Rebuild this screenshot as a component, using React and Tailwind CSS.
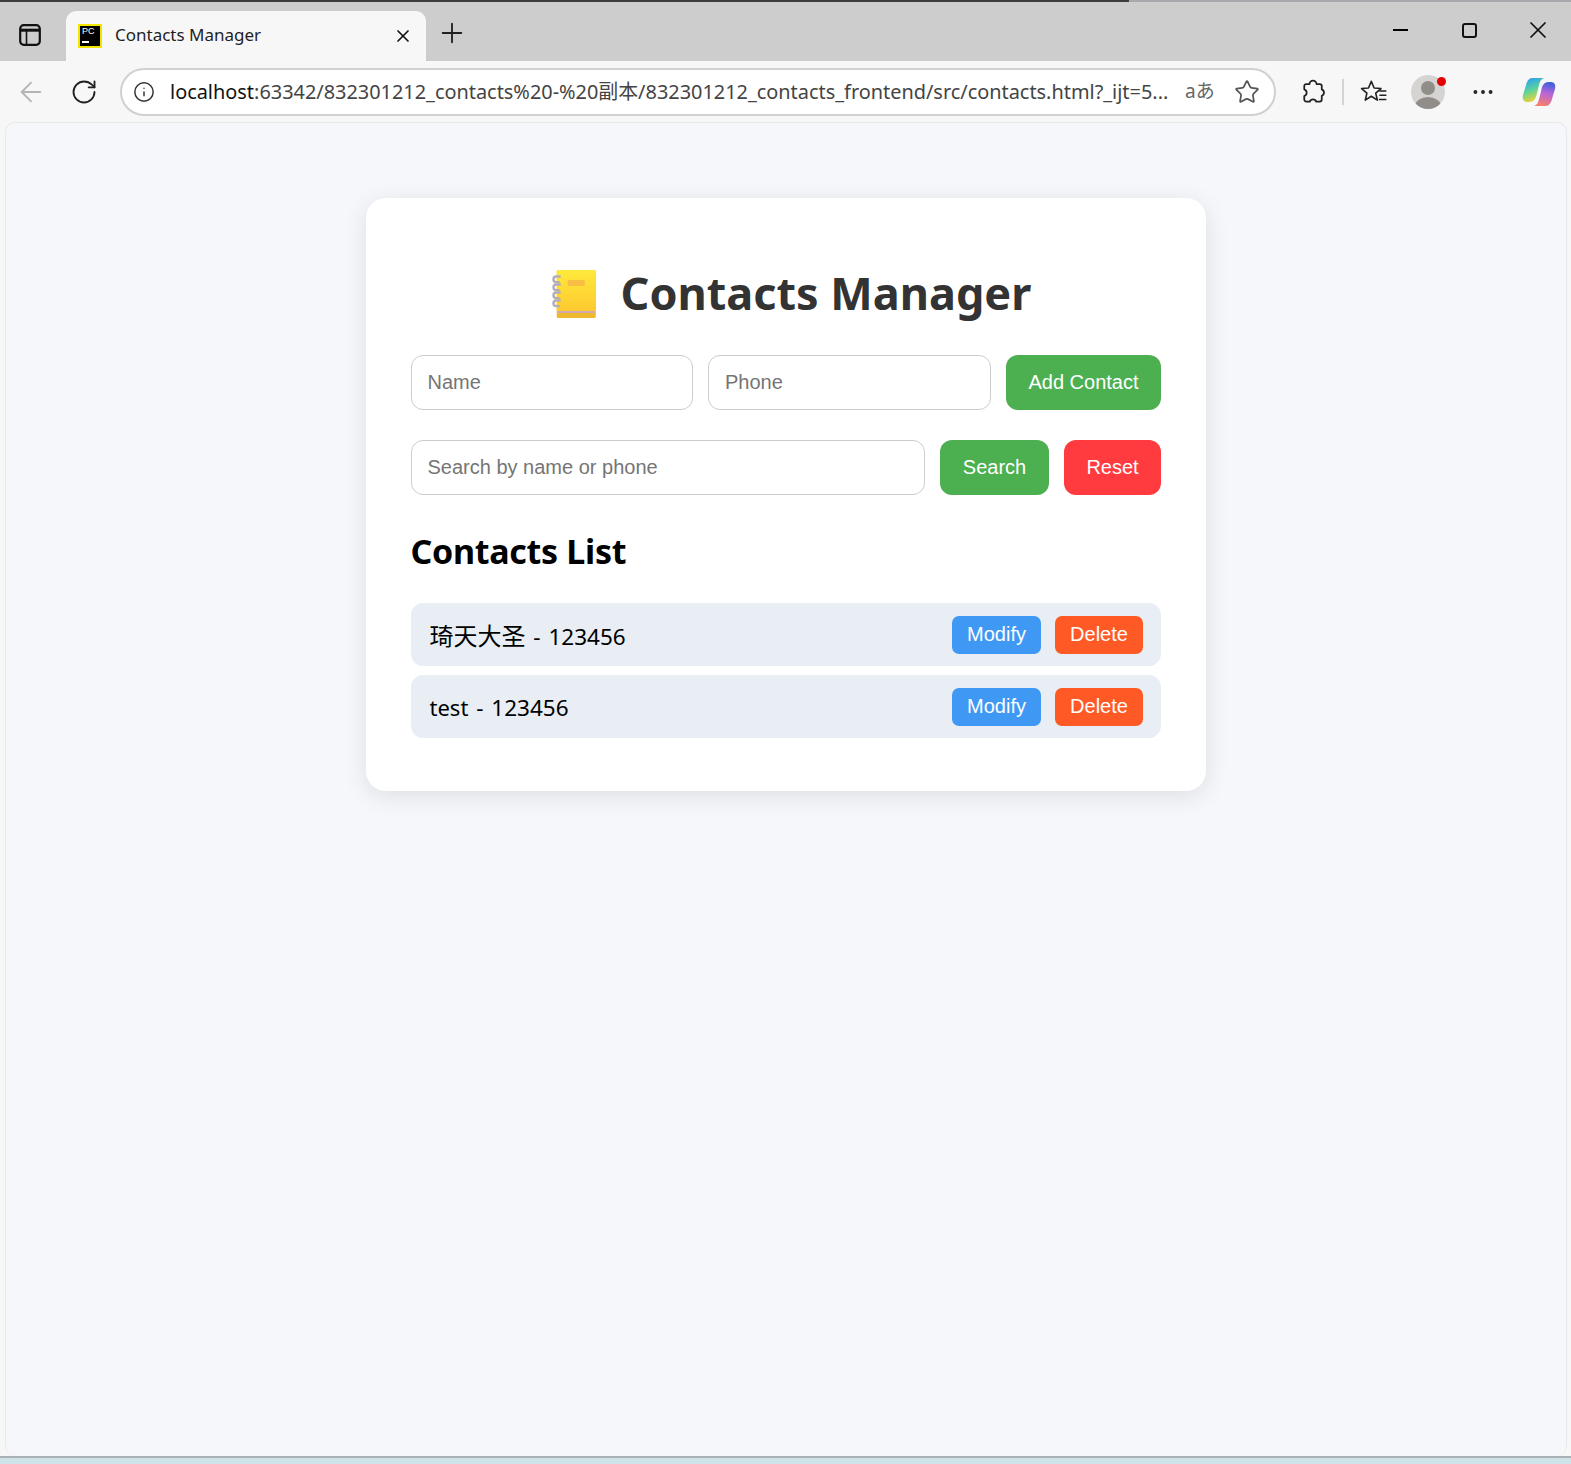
import { ArrowLeft, Info, MoreHorizontal, Plus, RotateCw, Star, X } from "lucide-react";

const contacts = [
  { id: 1, name: "琦天大圣", phone: "123456", cjk: true },
  { id: 2, name: "test", phone: "123456", cjk: false },
];

function PanelIcon() {
  return (
    <svg width="22" height="22" viewBox="0 0 22 22" fill="none" stroke="#111" strokeWidth="2.2">
      <rect x="1.2" y="1.2" width="19.6" height="19.6" rx="3.5" />
      <path d="M1.5 6.2h19" strokeWidth="3" />
      <path d="M7.5 6.5v14" strokeWidth="1.6" />
    </svg>
  );
}

function PyCharmIcon() {
  return (
    <div className="flex h-6 w-6 shrink-0 flex-col justify-between border-2 border-[#f2e500] bg-black px-[2px] pt-[1px] pb-[3px]">
      <span className="font-['Liberation_Sans',sans-serif] text-[9px] leading-[9px] text-white">PC</span>
      <span className="h-[2px] w-[7px] bg-white"></span>
    </div>
  );
}

function ExtensionIcon() {
  return (
    <svg width="28" height="28" viewBox="0 0 24 24" fill="none" stroke="#222" strokeWidth="1.5" strokeLinejoin="round">
      <path d="M9 5.2a3 3 0 0 1 6 0h2.800a1.700 1.700 0 0 1 1.700 1.700v2.800a3 3 0 0 1 0 5.600v3.200a1.700 1.700 0 0 1-1.700 1.700h-3a3 3 0 0 0-5.600 0H6.200a1.700 1.700 0 0 1-1.700-1.700v-3.100a3 3 0 0 0 0-5.700V6.900a1.700 1.700 0 0 1 1.700-1.700z" />
    </svg>
  );
}

function FavoritesIcon() {
  return (
    <svg width="28" height="26" viewBox="0 0 26 24" fill="none" stroke="#222" strokeWidth="1.500" strokeLinejoin="round">
      <path d="M10.500 2l2.600 6.300 6.400.5-4.900 4.300 1.500 6.400-5.600-3.500-5.600 3.500 1.500-6.400L1.500 8.800l6.400-.5z" />
      <path d="M18 11h6.500M18 15h6.500M17.500 19h7" strokeWidth="1.400" />
    </svg>
  );
}

function ProfileIcon() {
  return (
    <div className="relative h-[34px] w-[34px]">
      <svg width="34" height="34" viewBox="0 0 34 34">
        <defs>
          <clipPath id="avatar">
            <circle cx="17" cy="17" r="17" />
          </clipPath>
        </defs>
        <circle cx="17" cy="17" r="17" fill="#d6d4d2" />
        <g clipPath="url(#avatar)" fill="#918d89">
          <circle cx="17" cy="13" r="7" />
          <ellipse cx="17" cy="31" rx="13" ry="9" />
        </g>
      </svg>
      <span className="absolute top-[2px] right-[-1px] h-[9px] w-[9px] rounded-full bg-[#e30000]"></span>
    </div>
  );
}

function CopilotIcon() {
  return (
    <svg width="34" height="34" viewBox="0 0 34 34">
      <defs>
        <linearGradient id="cpA" x1="0.2" y1="0" x2="0.5" y2="1">
          <stop offset="0" stopColor="#2f9df0" />
          <stop offset="0.5" stopColor="#58d3a0" />
          <stop offset="1" stopColor="#f6d32c" />
        </linearGradient>
        <linearGradient id="cpB" x1="0.6" y1="0" x2="0.4" y2="1">
          <stop offset="0" stopColor="#3b62dc" />
          <stop offset="0.45" stopColor="#b865d8" />
          <stop offset="1" stopColor="#f6806a" />
        </linearGradient>
      </defs>
      <path d="M10 3h12c-3 1-4 3-5 7l-2.500 10c-1 4-3 7-7 7H5c-3.500 0-5-3-4-7l3-10c1-4 3-7 6-7z" fill="url(#cpA)" />
      <path d="M24 31H12c3-1 4-3 5-7l2.500-10c1-4 3-7 7-7H29c3.500 0 5 3 4 7l-3 10c-1 4-3 7-6 7z" fill="url(#cpB)" />
      <path d="M15.500 20l3-9.500c.4 3 .6 5-.5 9.500l-1.500 4z" fill="#fff" opacity="0.7" />
    </svg>
  );
}

function NotebookIcon() {
  return (
    <svg width="44" height="48" viewBox="0.5 1 43.5 48" className="shrink-0">
      <defs>
        <linearGradient id="nbPage" x1="0" y1="0" x2="0" y2="1">
          <stop offset="0" stopColor="#ffe93b" />
          <stop offset="1" stopColor="#fdc92f" />
        </linearGradient>
      </defs>
      <rect x="5" y="1" width="39" height="48" rx="1.500" fill="#eeb92e" />
      <rect x="5" y="1" width="39" height="41" rx="1.500" fill="url(#nbPage)" />
      <rect x="6" y="42" width="37" height="2" fill="#d2a9b0" />
      <rect x="16" y="11" width="17" height="6" rx="1" fill="#f9bd45" />
      <g fill="none" stroke="#b3adba" strokeWidth="2.400">
        <path d="M9 7.500H4.500a2.800 2.800 0 0 0 0 5.600H8" />
        <path d="M9 15.500H4.500a2.800 2.800 0 0 0 0 5.600H8" />
        <path d="M9 23.500H4.500a2.800 2.800 0 0 0 0 5.600H8" />
        <path d="M9 31.500H4.500a2.800 2.800 0 0 0 0 5.600H8" />
      </g>
    </svg>
  );
}

function BrowserChrome() {
  return (
    <div className="font-['Noto_Sans','Noto_Sans_CJK_SC',sans-serif]">
      <div className="relative flex h-[61px] items-end bg-[#cdcdcd] pl-[19px]">
        <div className="absolute top-0 left-0 h-[2px] w-[1129px] bg-[#3d3d3d]"></div>
        <div className="absolute top-0 right-0 h-[2px] w-[442px] bg-[#a9a9ad]"></div>
        <div className="mb-[15px] mr-[25px]">
          <PanelIcon />
        </div>
        <div className="flex h-[50px] w-[360px] items-center rounded-t-[10px] bg-[#f7f7f7] pr-[13px] pl-[12px]">
          <PyCharmIcon />
          <span className="mb-[3px] ml-[13px] flex-1 text-[17px] text-[#1f1f1f]">Contacts Manager</span>
          <X size={20} color="#111" strokeWidth={2} />
        </div>
        <div className="mb-[12px] ml-[10px]">
          <Plus size={32} color="#222" strokeWidth={1.400} />
        </div>
        <div className="flex-1"></div>
        <div className="mb-[17px] flex items-center pr-[19px]">
          <span className="h-[2px] w-[15px] bg-black"></span>
          <span className="ml-[54px] h-[15px] w-[15px] rounded-[3px] border-2 border-[#111]"></span>
          <div className="ml-[47px]">
            <X size={28} color="#111" strokeWidth={1.500} />
          </div>
        </div>
      </div>
      <div className="flex h-[61px] items-center bg-[#f7f7f7] pl-[15px]">
        <ArrowLeft size={32} color="#b5b5b5" strokeWidth={1.400} />
        <div className="ml-[23px]">
          <RotateCw size={28} color="#222" strokeWidth={1.600} />
        </div>
        <div className="ml-[22px] flex h-[48px] w-[1156px] items-center rounded-full border-2 border-[#d0d0d0] bg-white pr-[14px] pl-[11px]">
          <Info size={22} color="#333" strokeWidth={1.600} className="shrink-0" />
          <div className="mt-[1px] ml-[15px] w-[999px] shrink-0 overflow-hidden text-[19.9px] whitespace-nowrap text-[#444]">
            <span className="text-[#111]">localhost</span>:63342/832301212_contacts%20-%20副本/832301212_contacts_frontend/src/contacts.html?_ijt=5...
          </div>
          <span className="ml-[16px] shrink-0 text-[19px] whitespace-nowrap text-[#666]">aあ</span>
          <div className="ml-[19px] shrink-0">
            <Star size={26} color="#555" strokeWidth={1.600} />
          </div>
        </div>
        <div className="ml-[23px]">
          <ExtensionIcon />
        </div>
        <span className="ml-[15px] h-[26px] w-[2px] bg-[#d4d4d4]"></span>
        <div className="ml-[16px]">
          <FavoritesIcon />
        </div>
        <div className="ml-[23px]">
          <ProfileIcon />
        </div>
        <div className="ml-[25px]">
          <MoreHorizontal size={26} color="#222" strokeWidth={1.600} />
        </div>
        <div className="ml-[26px]">
          <CopilotIcon />
        </div>
      </div>
    </div>
  );
}

function TextField({ placeholder, className }) {
  return (
    <input
      placeholder={placeholder}
      className={`h-[55px] min-w-0 rounded-[12px] border border-[#ccc] bg-white pr-[15px] pl-[16px] font-['Liberation_Sans',sans-serif] text-[20px] placeholder:text-[#757575] ${className}`}
    />
  );
}

function ContactRow({ contact }) {
  return (
    <li className="flex h-[62.5px] items-center justify-between rounded-[12px] bg-[#e9eef5] px-[18px]">
      <span className="mt-[3px] pl-[1px] font-['Noto_Sans','Noto_Sans_CJK_SC',sans-serif] text-[22.5px] [word-spacing:2px] text-black">
        <span className={contact.cjk ? "text-[24px]" : "text-[22px]"}>{contact.name}</span> - {contact.phone}
      </span>
      <div className="mt-[1px] flex gap-[14px] font-['Liberation_Sans',sans-serif] text-[20px] text-white">
        <button className="h-[38px] w-[89px] rounded-[7px] bg-[#3f98f3] pb-[2px] pl-[1px]">Modify</button>
        <button className="h-[38px] w-[88px] rounded-[7px] bg-[#ff5a26] pb-[2px] pl-[1px]">Delete</button>
      </div>
    </li>
  );
}

export default function App() {
  return (
    <div className="flex h-[1464px] flex-col bg-[#cfe3e8]">
      <BrowserChrome />
      <div className="flex flex-1 flex-col bg-[#f7f7f7] pr-[4px] pl-[5px]">
        <main className="flex-1 rounded-[10px] border border-b-0 border-[#e9e9e9] bg-[#f5f7fa] pt-[75px] pr-[1px]">
          <div className="mx-auto w-[840px] rounded-[20px] bg-white px-[45px] pt-[45px] pb-[53.5px] shadow-[0_5px_25px_rgba(0,0,0,0.1)]">
            <h1 className="flex h-[112px] items-start gap-[25px] pt-[27px] pl-[141px] font-['Noto_Sans',sans-serif] text-[45px] leading-[62px] font-bold whitespace-nowrap text-[#333]">
              <NotebookIcon />
              <span className="-mt-[8px]">Contacts Manager</span>
            </h1>
            <div className="flex gap-[15px]">
              <TextField placeholder="Name" className="flex-1" />
              <TextField placeholder="Phone" className="flex-1" />
              <button className="h-[55px] w-[155px] rounded-[12px] bg-[#4caf50] pb-[2px] pl-[1px] font-['Liberation_Sans',sans-serif] text-[20px] text-white">
                Add Contact
              </button>
            </div>
            <div className="mt-[30px] flex gap-[15px]">
              <TextField placeholder="Search by name or phone" className="flex-1" />
              <button className="h-[55px] w-[109px] rounded-[12px] bg-[#4caf50] pb-[2px] pl-[1px] font-['Liberation_Sans',sans-serif] text-[20px] text-white">
                Search
              </button>
              <button className="h-[55px] w-[97px] rounded-[12px] bg-[#ff3b3f] pb-[2px] pl-[1px] font-['Liberation_Sans',sans-serif] text-[20px] text-white">
                Reset
              </button>
            </div>
            <h2 className="mt-[30px] h-[78px] font-['Noto_Sans',sans-serif] text-[34px] leading-[52px] font-bold tracking-[-0.3px] text-black">
              Contacts List
            </h2>
            <ul className="flex flex-col gap-[9.5px]">
              {contacts.map((contact) => (
                <ContactRow key={contact.id} contact={contact} />
              ))}
            </ul>
          </div>
        </main>
      </div>
      <div className="h-[2px] bg-[#a9b1b6]"></div>
      <div className="h-[6px]"></div>
    </div>
  );
}
